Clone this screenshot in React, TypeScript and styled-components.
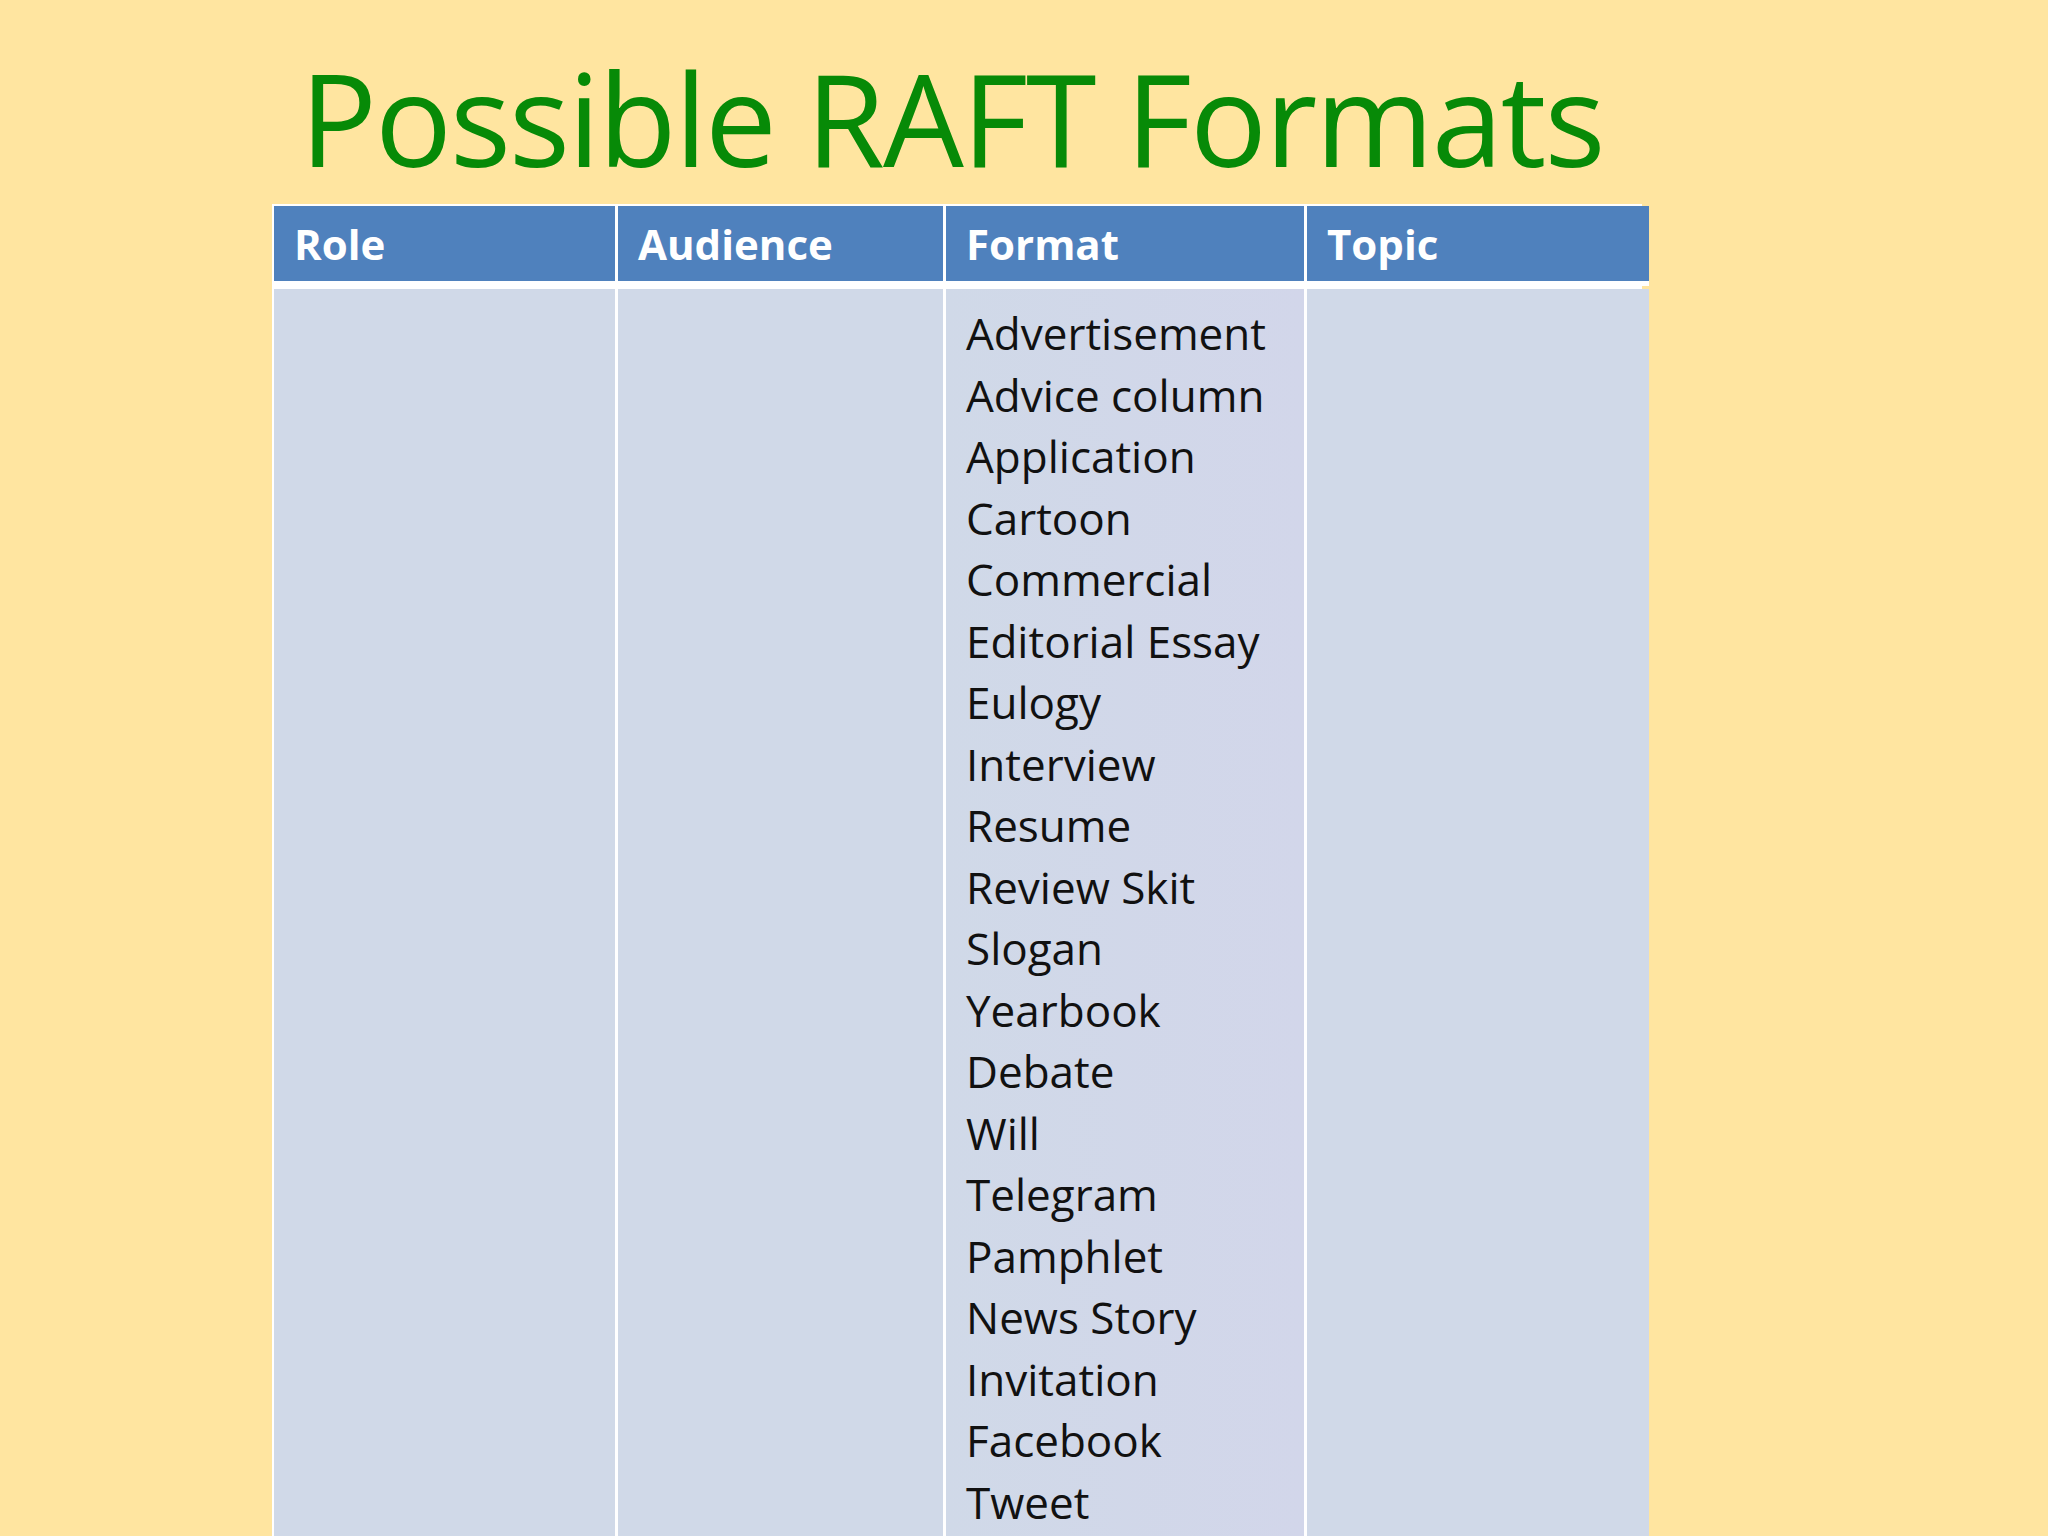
import React from 'react';
import styled, { createGlobalStyle } from 'styled-components';

const GlobalStyle = createGlobalStyle`
  html, body { margin: 0; padding: 0; }
  body { background: #ffe69f; font-family: 'Open Sans', 'Liberation Sans', sans-serif; }
`;

const Slide = styled.div`
  width: 2048px;
  height: 1536px;
  overflow: hidden;
  background: #ffe5a0;
  display: flex;
  flex-direction: column;
`;

const Title = styled.h1`
  margin: 32px 0 0 300px;
  height: 172px;
  font-size: 128px;
  font-weight: 400;
  letter-spacing: -2px;
  line-height: 172px;
  color: #078a07;
`;

const Table = styled.div`
  margin-left: 272px;
  width: 1366px;
  display: grid;
  grid-template-columns: 341px 325px 358px 342px;
  grid-template-rows: 80px 1fr;
  background: #ffffff;
  gap: 3px;
  padding: 2px 0 0;
  flex: 1;
  border-left: 2px solid #fff;
  border-right: 2px solid #fff;
`;

const HeadCell = styled.div`
  background: #4f81bd;
  color: #ffffff;
  font-weight: 700;
  font-size: 42px;
  display: flex;
  align-items: center;
  padding-left: 20px;
  border-bottom: 5px solid #fff;
`;

const BodyCell = styled.div<{ $tint?: boolean }>`
  background: ${({ $tint }) =>
    $tint ? 'linear-gradient(90deg, #d0d9e8 0%, #d2d6ea 100%)' : '#d0d9e8'};
  padding: 14px 0 0 20px;
`;

const Item = styled.div`
  font-size: 44px;
  line-height: 61.5px;
  color: #111111;
`;

const formats = [
  'Advertisement', 'Advice column', 'Application', 'Cartoon', 'Commercial',
  'Editorial Essay', 'Eulogy', 'Interview', 'Resume', 'Review Skit', 'Slogan',
  'Yearbook', 'Debate', 'Will', 'Telegram', 'Pamphlet', 'News Story',
  'Invitation', 'Facebook', 'Tweet',
];

export default function App() {
  return (
    <Slide>
      <GlobalStyle />
      <Title>Possible RAFT Formats</Title>
      <Table>
        <HeadCell>Role</HeadCell>
        <HeadCell>Audience</HeadCell>
        <HeadCell>Format</HeadCell>
        <HeadCell>Topic</HeadCell>
        <BodyCell />
        <BodyCell />
        <BodyCell $tint>
          {formats.map((f) => (
            <Item key={f}>{f}</Item>
          ))}
        </BodyCell>
        <BodyCell />
      </Table>
    </Slide>
  );
}
